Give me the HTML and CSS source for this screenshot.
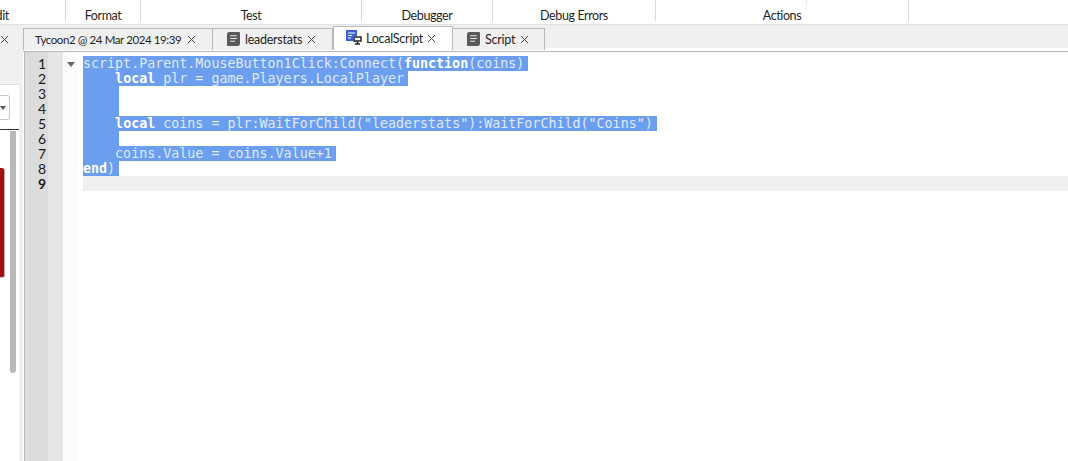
FILE: index.html
```html
<!DOCTYPE html>
<html lang="en">
<head>
<meta charset="utf-8">
<title>LocalScript</title>
<link rel="stylesheet" href="styles.css">
</head>
<body>
<div class="app">
  <header class="ribbon">
    <div class="group g-edit"><span class="label edit-label">Edit</span></div>
    <div class="group g-format"><span class="label">Format</span></div>
    <div class="group g-test"><span class="label">Test</span></div>
    <div class="group g-debugger"><span class="label">Debugger</span></div>
    <div class="group g-errors"><span class="label">Debug Errors</span></div>
    <div class="group g-actions"><span class="label">Actions</span></div>
    <div class="group g-rest"></div>
  </header>
  <div class="workspace">
    <aside class="side">
      <div class="side-head"><svg class="close" viewBox="0 0 9 9"><path d="M1 1l7 7M8 1l-7 7"/></svg></div>
      <div class="side-filter"><div class="dropdown"><i class="caret"></i></div></div>
      <div class="side-list">
        <div class="red-box"></div>
        <div class="scrollbar"></div>
      </div>
    </aside>
    <div class="sash"></div>
    <main class="editor-col">
      <nav class="tabs">
        <div class="tab t-place"><span class="place-name">Tycoon2 @ 24 Mar 2024 19:39</span><svg class="close" viewBox="0 0 9 9"><path d="M1 1l7 7M8 1l-7 7"/></svg></div>
        <div class="tab t-leader">
          <svg class="doc" viewBox="0 0 14 15"><path d="M2.500 0H13a1 1 0 0 1 1 1v11.500a2.500 2.500 0 0 1-2.500 2.500H1a1 1 0 0 1-1-1V2.500A2.500 2.500 0 0 1 2.500 0z" fill="#5a5a5a"/><path d="M3.500 4h7M3.500 7h7M3.500 10h5" stroke="#e6e6e6" stroke-width="1.100"/></svg>
          <span>leaderstats</span><svg class="close" viewBox="0 0 9 9"><path d="M1 1l7 7M8 1l-7 7"/></svg></div>
        <div class="tab active t-local">
          <svg class="local" viewBox="0 0 16 15"><path d="M0 0H11V6H7V11H0z" fill="#3b5fd0"/><path d="M2 3h7M2 5.500h4M2 8h3" stroke="#fff" stroke-width="1.100"/><rect x="8" y="7" width="7" height="4" fill="#fff" stroke="#222" stroke-width="1.500"/><path d="M11.500 11v2.500M9 14h5" stroke="#222" stroke-width="1.500"/></svg>
          <span>LocalScript</span><svg class="close" viewBox="0 0 9 9"><path d="M1 1l7 7M8 1l-7 7"/></svg></div>
        <div class="tab t-script">
          <svg class="doc" viewBox="0 0 14 15"><path d="M2.500 0H13a1 1 0 0 1 1 1v11.500a2.500 2.500 0 0 1-2.500 2.500H1a1 1 0 0 1-1-1V2.500A2.500 2.500 0 0 1 2.500 0z" fill="#5a5a5a"/><path d="M3.500 4h7M3.500 7h7M3.500 10h5" stroke="#e6e6e6" stroke-width="1.100"/></svg>
          <span>Script</span><svg class="close" viewBox="0 0 9 9"><path d="M1 1l7 7M8 1l-7 7"/></svg></div>
      </nav>
      <div class="tab-rule"></div>
      <section class="editor">
        <div class="gutter">
          <div class="num">1</div><div class="num">2</div><div class="num">3</div><div class="num">4</div><div class="num">5</div><div class="num">6</div><div class="num">7</div><div class="num">8</div><div class="num current">9</div>
        </div>
        <div class="marks"></div>
        <div class="fold"><i class="fold-arrow"></i></div>
        <div class="code">
          <div class="line"><span class="sel">script.Parent.MouseButton1Click:Connect(<b>function</b>(coins)</span></div>
          <div class="line"><span class="sel">    <b>local</b> plr = game.Players.LocalPlayer</span></div>
          <div class="line"><span class="sel">    </span></div>
          <div class="line"><span class="sel">    </span></div>
          <div class="line"><span class="sel">    <b>local</b> coins = plr:WaitForChild("leaderstats"):WaitForChild("Coins")</span></div>
          <div class="line"><span class="sel">    </span></div>
          <div class="line"><span class="sel">    coins.Value = coins.Value+1</span></div>
          <div class="line"><span class="sel"><b>end</b>)</span></div>
          <div class="line current-line"></div>
        </div>
      </section>
    </main>
  </div>
</div>
</body>
</html>
```
FILE: styles.css
```css
* { box-sizing: border-box; }
html, body { margin: 0; padding: 0; width: 1068px; height: 461px; overflow: hidden; background: #fff; }
body { font-family: "Lato", "Noto Sans", sans-serif; font-size: 12.5px; color: #1f1f1f; }
.app { display: flex; flex-direction: column; height: 461px; }

.ribbon { display: flex; height: 25px; flex: none; border-bottom: 1px solid #e2e2e2; background: #fff; }
.group { display: flex; justify-content: center; height: 21px; border-right: 1px solid #d6d6d6; }
.label { margin-top: 8px; line-height: 16px; white-space: nowrap; letter-spacing: -0.4px; }
.g-edit { width: 66px; justify-content: flex-start; }
.edit-label { margin-left: -11px; }
.g-format { width: 75px; }
.g-test { width: 221px; }
.g-debugger { width: 131px; }
.g-errors { width: 163px; }
.g-actions { width: 253px; background: linear-gradient(#e2e2e2, #e2e2e2) 150px 0 / 1px 5px no-repeat; }
.g-rest { flex: 1; border-right: 0; }

.workspace { display: flex; flex: 1; min-height: 0; }
.side { width: 19px; flex: none; display: flex; flex-direction: column; overflow: hidden; }
.side-head { height: 60px; flex: none; background: #f0f0f0; border-bottom: 1px solid #dcdcdc; padding: 10px 0 0 0; }
.side-head .close { margin-left: 0; }
.side-filter { height: 45px; flex: none; border-bottom: 1px solid #333; padding-top: 10px; }
.dropdown { width: 10px; height: 25px; border: 1px solid #c8c8c8; border-left: 0; border-radius: 0 3px 3px 0; display: flex; align-items: center; }
.caret { display: block; width: 0; height: 0; border-left: 3px solid transparent; border-right: 3px solid transparent; border-top: 4px solid #555; }
.side-list { flex: 1; display: flex; align-items: flex-start; }
.red-box { width: 5px; height: 110px; margin-top: 38px; flex: none; background: #a01010; border-right: 1px solid #c9a5a5; border-bottom: 1px solid #c9c9c9; border-radius: 0 3px 3px 0; }
.scrollbar { width: 6px; height: 242px; margin: 1px 0 0 5px; flex: none; background: #b9b9b9; border-radius: 0 0 3px 3px; }
.sash { width: 4px; flex: none; background: #f0f0f0; }

.editor-col { flex: 1; min-width: 0; display: flex; flex-direction: column; background: #fff; }
.tabs { display: flex; height: 25px; flex: none; background: linear-gradient(#f0f0f0 23px, #fff 23px); align-items: flex-end; }
.tab { height: 22px; display: flex; align-items: center; background: #f0f0f0; border: 1px solid #b9b9b9; border-bottom: 0; border-left-width: 0; padding-right: 16px; white-space: nowrap; letter-spacing: -0.25px; }
.t-place { width: 190px; padding-left: 11px; border-left-width: 1px; }
.place-name { font-size: 11.5px; letter-spacing: -0.4px; }
.t-leader { width: 120px; padding-left: 14px; }
.t-local { width: 120px; padding-left: 12px; }
.t-script { width: 92px; padding-left: 14px; padding-right: 15px; }
.tab.active { height: 24px; background: #fff; border-left-width: 1px; }
.close { display: block; width: 9px; height: 9px; margin-left: auto; flex: none; }
.close path { fill: none; stroke: #444; stroke-width: 1; }
.doc { width: 13px; height: 14px; margin: -1px 5px 0 0; flex: none; }
.local { width: 16px; height: 15px; margin-right: 4px; flex: none; margin-top: -2px; }
.tab-rule { height: 2px; flex: none; background: #fff; border-bottom: 1px solid #b9b9b9; }

.editor { flex: 1; display: flex; min-height: 0; margin-left: 1px; border-left: 1px solid #b9b9b9; }
.gutter { width: 23px; flex: none; background: #dcdcdc; padding-top: 4px; }
.num { height: 15px; line-height: 15px; width: 21px; text-align: right; font-size: 14px; font-family: "Lato", "Noto Sans", sans-serif; color: #1a1a1a; }
.num.current { font-weight: 700; }
.marks { width: 15px; flex: none; background: #e6e6e6; }
.fold { width: 15px; flex: none; background: #fbfbfb; padding: 10px 0 0 4px; }
.fold-arrow { display: block; width: 0; height: 0; border-left: 4px solid transparent; border-right: 4px solid transparent; border-top: 5px solid #666; }
.code { flex: 1; min-width: 0; padding: 4px 0 0 5px; font-family: "DejaVu Sans Mono", monospace; font-size: 13.33px; }
.line { height: 15px; line-height: 15px; white-space: pre; }
.sel { display: inline-block; height: 15px; background: #6c9ef0; color: #dfeaff; padding-right: 4px; }
.sel b { color: #fff; font-weight: 700; }
.current-line { background: #f0f0f0; }
```
